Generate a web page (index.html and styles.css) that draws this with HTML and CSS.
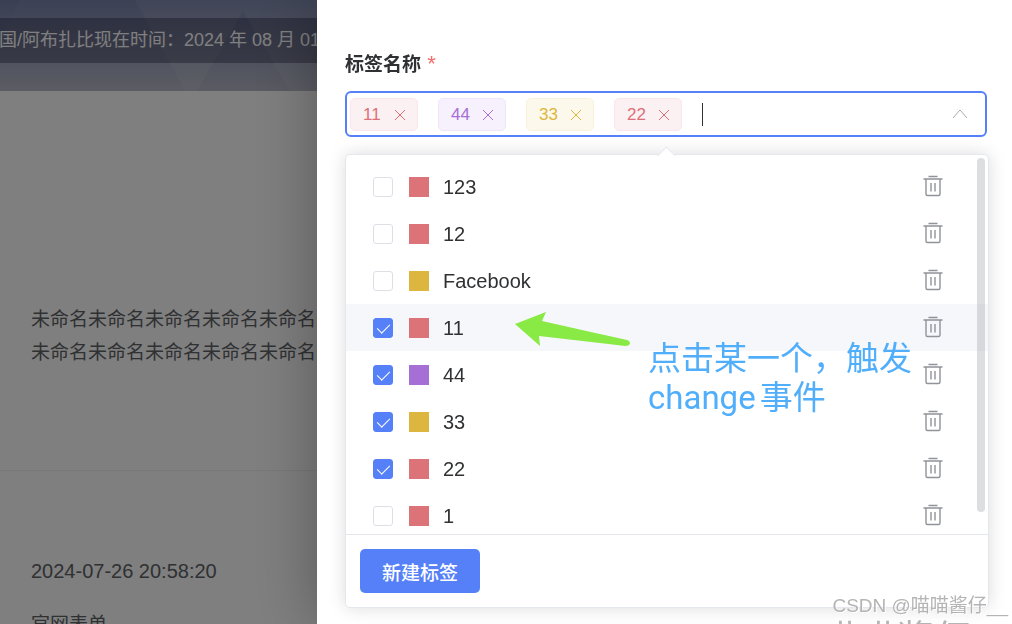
FILE: index.html
```html
<!DOCTYPE html>
<html lang="zh-CN">

<head>
    <meta charset="UTF-8">
    <meta name="viewport" content="width=device-width, initial-scale=1.0">
    <title>标签名称</title>
    <link rel="stylesheet" href="styles.css">
</head>

<body>
    <!-- icons -->
    <svg class="sprite" aria-hidden="true">
        <symbol id="icon-trash" viewBox="0 0 20 22">
            <path d="M5.5 1.5h9M.5 4h19" />
            <path d="M3 4v15q0 1.5 1.5 1.5h11q1.5 0 1.5-1.5V4M8 8v8.5M12 8v8.5" />
        </symbol>
        <symbol id="icon-close" viewBox="0 0 12 12">
            <path d="M1 1l10 10M11 1L1 11" />
        </symbol>
    </svg>

    <main class="page">
        <header class="banner">
            <svg class="banner-bg" viewBox="0 0 317 91" preserveAspectRatio="xMinYMin slice" aria-hidden="true">
                <path d="M20 0H135L185 91H0V42z" fill="#fff" fill-opacity=".03" />
                <path d="M135 0L185 91H197L243 11L290 91H317V0z" fill="#fff" fill-opacity=".1" />
            </svg>
            <p class="clock">国/阿布扎比现在时间：2024 年 08 月 01</p>
        </header>
        <section class="record">
            <p>未命名未命名未命名未命名未命名未命名</p>
            <p>未命名未命名未命名未命名未命名未命名</p>
        </section>
        <section class="record record-next">
            <p class="date">2024-07-26 20:58:20</p>
            <p>官网表单</p>
        </section>
    </main>

    <div class="mask"></div>

    <aside class="drawer">
        <label class="field-label" for="tag-input">标签名称 <span class="required">*</span></label>
        <div class="select">
            <div class="select-box">
                <span class="tag red">11 <button type="button" aria-label="移除 11"><svg><use href="#icon-close" /></svg></button></span>
                <span class="tag purple">44 <button type="button" aria-label="移除 44"><svg><use href="#icon-close" /></svg></button></span>
                <span class="tag yellow">33 <button type="button" aria-label="移除 33"><svg><use href="#icon-close" /></svg></button></span>
                <span class="tag red">22 <button type="button" aria-label="移除 22"><svg><use href="#icon-close" /></svg></button></span>
                <input type="text" id="tag-input" class="tag-input">
                <svg class="chevron" viewBox="0 0 16 10" aria-hidden="true">
                    <path d="M1 9L8 1L15 9" />
                </svg>
            </div>

            <div class="dropdown">
                <ul class="options">
                    <li class="option">
                        <label><input type="checkbox"><i class="swatch bg-red"></i>123</label>
                        <button type="button" class="delete" aria-label="删除 123"><svg><use href="#icon-trash" /></svg></button>
                    </li>
                    <li class="option">
                        <label><input type="checkbox"><i class="swatch bg-red"></i>12</label>
                        <button type="button" class="delete" aria-label="删除 12"><svg><use href="#icon-trash" /></svg></button>
                    </li>
                    <li class="option">
                        <label><input type="checkbox"><i class="swatch bg-yellow"></i>Facebook</label>
                        <button type="button" class="delete" aria-label="删除 Facebook"><svg><use href="#icon-trash" /></svg></button>
                    </li>
                    <li class="option hover">
                        <label><input type="checkbox" checked><i class="swatch bg-red"></i>11</label>
                        <button type="button" class="delete" aria-label="删除 11"><svg><use href="#icon-trash" /></svg></button>
                    </li>
                    <li class="option">
                        <label><input type="checkbox" checked><i class="swatch bg-purple"></i>44</label>
                        <button type="button" class="delete" aria-label="删除 44"><svg><use href="#icon-trash" /></svg></button>
                    </li>
                    <li class="option">
                        <label><input type="checkbox" checked><i class="swatch bg-yellow"></i>33</label>
                        <button type="button" class="delete" aria-label="删除 33"><svg><use href="#icon-trash" /></svg></button>
                    </li>
                    <li class="option">
                        <label><input type="checkbox" checked><i class="swatch bg-red"></i>22</label>
                        <button type="button" class="delete" aria-label="删除 22"><svg><use href="#icon-trash" /></svg></button>
                    </li>
                    <li class="option">
                        <label><input type="checkbox"><i class="swatch bg-red"></i>1</label>
                        <button type="button" class="delete" aria-label="删除 1"><svg><use href="#icon-trash" /></svg></button>
                    </li>
                </ul>
                <div class="scroll-thumb"></div>
                <div class="dropdown-footer">
                    <button type="button" class="create">新建标签</button>
                </div>

                <!-- note over the list -->
                <svg class="note-arrow" viewBox="0 0 116 36" aria-hidden="true">
                    <path d="M0 13L31 1L27 10L112 29Q115 30 115 32.500Q114 35 110 35L24 25L25 35z" />
                </svg>
                <p class="note">点击某一个，触发<br><span class="event">change</span>事件</p>
            </div>
        </div>
    </aside>

    <div class="watermark-large">喵喵酱仔</div>
    <div class="watermark">CSDN @喵喵酱仔__</div>
</body>

</html>
```
FILE: styles.css
```css
* {
    margin: 0;
    padding: 0;
    box-sizing: border-box;
}

body {
    height: 100vh;
    overflow: hidden;
    position: relative;
    font-family: "Liberation Sans", "Noto Sans CJK SC", sans-serif;
    font-size: 20px;
    color: #303133;
    background-color: #fff;
}

button {
    border: none;
    background: none;
    font: inherit;
    color: inherit;
    cursor: pointer;
}

.sprite {
    position: absolute;
    width: 0;
    height: 0;
}

/* page behind the drawer */
.page {
    height: 100%;
    overflow: hidden;
    white-space: nowrap;
}

.banner {
    position: relative;
    padding: 18px 0 28px;
    background: linear-gradient(#747fa8, #b5b7c6);
}

.banner-bg {
    position: absolute;
    top: 0;
    left: 0;
    width: 317px;
    height: 100%;
}

.clock {
    position: relative;
    line-height: 45px;
    font-size: 18px;
    text-indent: -1px;
    color: #fff;
    background-color: rgba(20, 20, 50, 0.35);
}

.record {
    padding: 212px 31px 101px;
    line-height: 33px;
    font-size: 19px;
    color: #606266;
    border-bottom: 1px solid #f0f1f4;
}

.record-next {
    padding-top: 84px;
}

.date {
    margin-bottom: 20px;
    font-size: 20px;
}

.mask {
    position: fixed;
    inset: 0;
    background-color: rgba(0, 0, 0, 0.5);
}

/* drawer */
.drawer {
    position: fixed;
    top: 0;
    right: 0;
    bottom: 0;
    left: 317px;
    padding: 48px 25px 0 28px;
    background-color: #fff;
    box-shadow: 0 0 60px rgba(0, 0, 0, 0.32);
}

.field-label {
    display: block;
    margin-bottom: 10px;
    line-height: 33px;
    font-size: 19px;
    font-weight: bold;
}

.required {
    margin-left: 1px;
    font-size: 22px;
    line-height: 1;
    font-weight: normal;
    color: #f56c6c;
}

.select {
    position: relative;
}

.select-box {
    display: flex;
    align-items: center;
    gap: 20px;
    height: 46px;
    padding: 0 17px 0 3px;
    border: 2px solid #5580f8;
    border-radius: 6px;
}

.tag {
    display: flex;
    align-items: center;
    justify-content: space-between;
    width: 68px;
    height: 33px;
    padding: 1px 11px 0 12px;
    font-size: 17px;
    border: 1px solid;
    border-radius: 5px;
}

.tag button {
    height: 12px;
}

.tag svg {
    display: block;
    width: 12px;
    height: 12px;
    stroke: currentColor;
    stroke-width: 1;
    fill: none;
}

.red {
    color: #dc7079;
    background-color: #fcf1f2;
    border-color: #fae6e8;
}

.purple {
    color: #a66fd6;
    background-color: #f7f1fd;
    border-color: #efe5fa;
}

.yellow {
    color: #dcb63d;
    background-color: #fcf9ec;
    border-color: #f8f2dc;
}

.tag-input {
    flex: 1;
    min-width: 0;
    height: 23px;
    border: none;
    border-left: 1px solid #303133;
    outline: none;
    font: inherit;
    background: none;
}

.chevron {
    width: 16px;
    height: 10px;
    fill: none;
    stroke: #a8abb2;
    stroke-width: 1;
}

/* dropdown */
.dropdown {
    position: absolute;
    top: 63px;
    left: 0;
    right: -2px;
    background-color: #fff;
    border: 1px solid #e4e7ed;
    border-radius: 5px;
    box-shadow: 0 0 18px rgba(0, 0, 0, 0.14);
}

.dropdown::before {
    content: "";
    position: absolute;
    top: -6px;
    left: 50%;
    width: 12px;
    height: 12px;
    margin-left: -7px;
    background-color: #fff;
    border: 1px solid #e4e7ed;
    border-right: none;
    border-bottom: none;
    transform: rotate(45deg);
}

.options {
    position: relative;
    height: 379px;
    padding-top: 8px;
    overflow: hidden;
    list-style: none;
}

.option {
    display: flex;
    align-items: center;
    justify-content: space-between;
    height: 47px;
    padding: 0 45px 0 27px;
}

.option.hover {
    background-color: #f5f7fa;
}

.option label {
    display: flex;
    align-items: center;
    line-height: 24px;
}

.option input {
    appearance: none;
    position: relative;
    width: 20px;
    height: 20px;
    border: 1px solid #dcdfe6;
    border-radius: 3px;
    background-color: #fff;
}

.option input:checked {
    background-color: #5580f8;
    border-color: #5580f8;
}

.option input:checked::after {
    content: "";
    position: absolute;
    top: 2px;
    left: 6px;
    width: 6px;
    height: 11px;
    border: solid #fff;
    border-width: 0 1px 1px 0;
    transform: rotate(45deg);
}

.swatch {
    width: 20px;
    height: 20px;
    margin: 0 14px 0 16px;
}

.bg-red {
    background-color: #dc7379;
}

.bg-yellow {
    background-color: #dcb63f;
}

.bg-purple {
    background-color: #a56fd6;
}

.delete svg {
    display: block;
    width: 20px;
    height: 22px;
    margin-bottom: 2px;
    fill: none;
    stroke: #909399;
    stroke-width: 1.4;
}

.scroll-thumb {
    position: absolute;
    top: 3px;
    right: 3px;
    width: 8px;
    height: 354px;
    border-radius: 4px;
    background-color: rgba(144, 147, 153, 0.3);
}

.dropdown-footer {
    padding: 14px;
    border-top: 1px solid #e4e7ed;
}

.create {
    display: block;
    height: 44px;
    padding: 0 22px;
    font-size: 19px;
    font-weight: 500;
    color: #fff;
    background-color: #5580f8;
    border-radius: 5px;
}

.note-arrow {
    position: absolute;
    top: 156px;
    left: 169px;
    width: 116px;
    height: 36px;
    fill: #89e945;
}

.note {
    position: absolute;
    top: 184px;
    left: 302px;
    line-height: 39px;
    font-family: Roboto, "Noto Sans CJK SC", sans-serif;
    font-size: 33px;
    white-space: nowrap;
    color: #50aefa;
    pointer-events: none;
}

.event {
    margin-right: 4px;
}

/* watermarks */
.watermark,
.watermark-large {
    position: fixed;
    white-space: nowrap;
    color: #b4b4b4;
    text-shadow: 1px 1px 0 #fff;
    pointer-events: none;
}

.watermark {
    right: 4px;
    bottom: 4px;
    line-height: 28px;
    font-size: 19px;
}

.watermark-large {
    right: 40px;
    bottom: -38px;
    line-height: 46px;
    font-size: 38px;
}
```
